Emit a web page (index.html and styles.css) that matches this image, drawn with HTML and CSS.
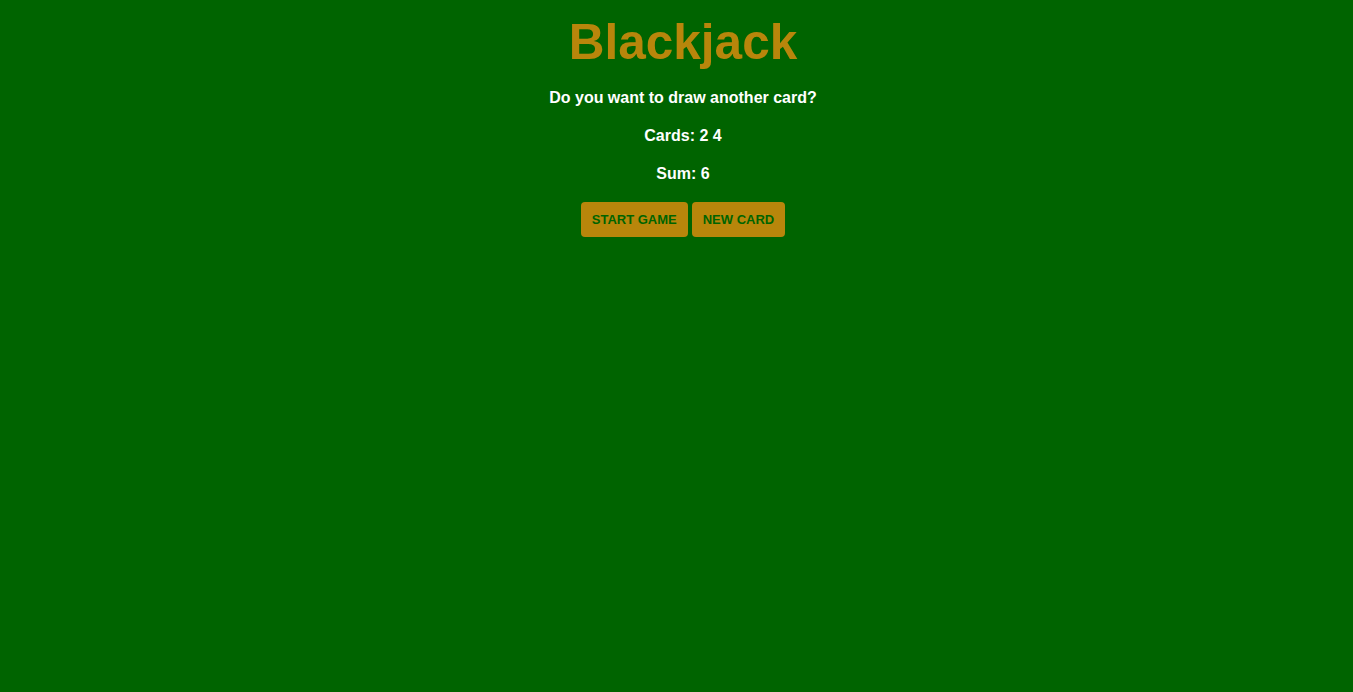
FILE: index.html
```html
<!DOCTYPE html>
<html lang="en">
<head>
<meta charset="utf-8">
<title>Blackjack</title>
<link rel="stylesheet" href="styles.css">
</head>
<body>
<main class="game">
  <h1 class="title">Blackjack</h1>
  <p class="message">Do you want to draw another card?</p>
  <p class="cards">Cards: 2 4</p>
  <p class="sum">Sum: 6</p>
  <div class="actions">
    <button class="btn">START GAME</button>
    <button class="btn">NEW CARD</button>
  </div>
</main>
</body>
</html>
```
FILE: styles.css
```css
html, body {
  margin: 0;
  height: 100%;
}
body {
  background: #006400;
  font-family: "Liberation Sans", Arial, sans-serif;
  font-weight: bold;
  color: #ffffff;
  text-align: center;
}
.game {
  padding-left: 13px;
  padding-top: 1px;
}
.title {
  color: #b8860b;
  font-size: 49.5px;
  line-height: 57px;
  margin: 12px 0 18px;
}
.message, .cards, .sum {
  font-size: 16px;
  margin: 0 0 19px;
  line-height: 19px;
}
.actions {
  display: flex;
  justify-content: center;
  gap: 4px;
  margin-top: 11px;
}
.btn {
  background: #b8860b;
  color: #006400;
  border: none;
  border-radius: 4px;
  font-family: "Liberation Sans", Arial, sans-serif;
  font-weight: bold;
  font-size: 13px;
  height: 35px;
  padding: 0 11px;
}
```
